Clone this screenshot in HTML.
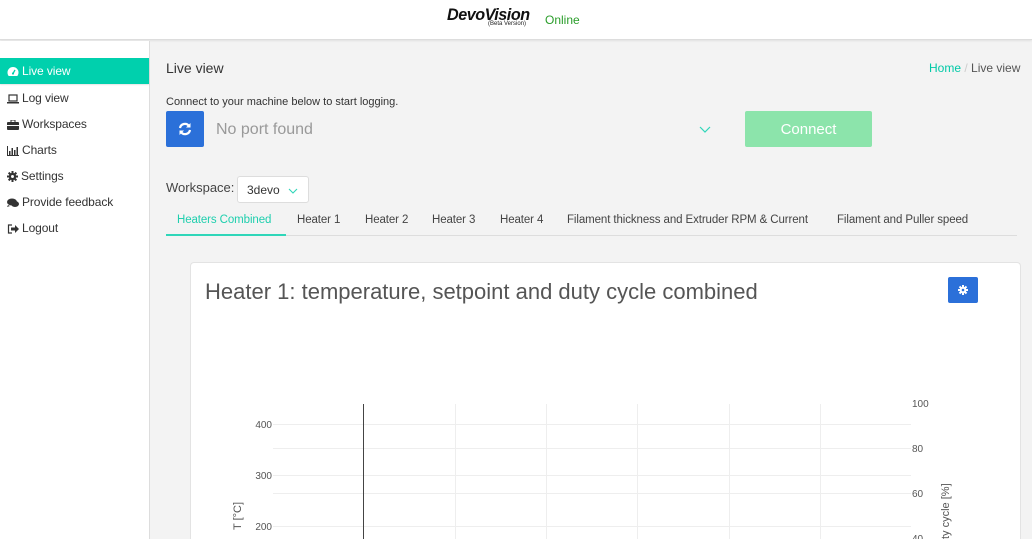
<!DOCTYPE html>
<html><head><meta charset="utf-8"><style>
*{margin:0;padding:0;box-sizing:border-box}
html,body{width:1032px;height:539px;overflow:hidden}
body{background:#f3f3f3;font-family:"Liberation Sans",sans-serif;position:relative;color:#333}
.a{position:absolute;white-space:nowrap}
#hdr{left:0;top:0;width:1032px;height:40px;background:#fff;border-bottom:1px solid #ddd;box-shadow:0 1px 2px rgba(0,0,0,.08)}
#side{left:0;top:41px;width:150px;height:498px;background:#fff;border-right:1px solid #ddd}
.nav{position:absolute;left:0;width:149px;height:26px;font-size:12px;line-height:26px;padding-left:7px;color:#333;letter-spacing:-0.1px}
.nav svg{vertical-align:-2px;margin-right:3px}
.tab{font-size:11.5px;color:#444;top:214px;letter-spacing:-0.1px}
</style></head><body>
<div id="hdr" class="a">
 <div class="a" style="left:447px;top:5px;font-size:17px;font-weight:bold;font-style:italic;color:#111;letter-spacing:-0.5px;transform:scaleX(0.95);transform-origin:left">DevoVision</div>
 <div class="a" style="left:488px;top:21px;font-size:6px;color:#222">(Beta Version)</div>
 <div class="a" style="left:545px;top:13px;font-size:12px;color:#2a9d2a">Online</div>
</div>
<div id="side" class="a">
 <div class="nav" style="top:17px;background:#00d0ad;color:#fff;box-shadow:0 1px 1px rgba(0,0,0,.1)"><svg width="12" height="11" viewBox="0 0 12 11"><path d="M6 1A5.5 5.5 0 0 0 .5 6.5c0 1.3.4 2.5 1.2 3.5h8.6c.8-1 1.2-2.2 1.2-3.5A5.5 5.5 0 0 0 6 1z" fill="#fff"/><path d="M6 7.5L8 4" stroke="#00d0ad" stroke-width="1.3"/><circle cx="6" cy="7.5" r="1.1" fill="#00d0ad"/></svg>Live view</div>
 <div class="nav" style="top:44px"><svg width="12" height="10" viewBox="0 0 12 10"><rect x="2" y="1" width="8" height="6" fill="none" stroke="#333" stroke-width="1.2"/><rect x="0" y="8" width="12" height="1.5" fill="#333"/></svg>Log view</div>
 <div class="nav" style="top:70px"><svg width="12" height="10" viewBox="0 0 12 10"><rect x="0" y="2" width="12" height="8" rx="1" fill="#333"/><rect x="4" y="0" width="4" height="2.5" fill="none" stroke="#333"/><rect x="0" y="5" width="12" height="1" fill="#fff"/></svg>Workspaces</div>
 <div class="nav" style="top:96px"><svg width="12" height="10" viewBox="0 0 12 10"><path d="M.5 0v9.5H12" fill="none" stroke="#333"/><rect x="2" y="5" width="1.5" height="4" fill="#333"/><rect x="4.5" y="2" width="1.5" height="7" fill="#333"/><rect x="7" y="4" width="1.5" height="5" fill="#333"/><rect x="9.5" y="1" width="1.5" height="8" fill="#333"/></svg>Charts</div>
 <div class="nav" style="top:122px"><svg width="11" height="11" viewBox="0 0 12 12"><circle cx="6" cy="6" r="4" fill="#333"/><path d="M6 0v12M0 6h12M1.8 1.8l8.4 8.4M10.2 1.8l-8.4 8.4" stroke="#333" stroke-width="2.2"/><circle cx="6" cy="6" r="1.6" fill="#fff"/></svg>Settings</div>
 <div class="nav" style="top:148px"><svg width="12" height="10" viewBox="0 0 12 10"><ellipse cx="5" cy="4" rx="5" ry="3.5" fill="#333"/><ellipse cx="8" cy="6" rx="4" ry="3" fill="#333"/><path d="M1 7l-1 2 3-1z" fill="#333"/></svg>Provide feedback</div>
 <div class="nav" style="top:174px"><svg width="12" height="10" viewBox="0 0 12 10"><path d="M5 1H1.5v8H5" fill="none" stroke="#333" stroke-width="1.2"/><path d="M4 3.5h4V1l4 4-4 4V6.5H4z" fill="#333"/></svg>Logout</div>
</div>
<div class="a" style="left:166px;top:60px;font-size:14px;color:#333">Live view</div>
<div class="a" style="left:929px;top:61px;font-size:12px;color:#00c9a7">Home <span style="color:#ccc">/</span> <span style="color:#555">Live view</span></div>
<div class="a" style="left:166px;top:96px;font-size:11px;color:#333">Connect to your machine below to start logging.</div>
<div class="a" style="left:166px;top:111px;width:38px;height:36px;background:#2b70d9;border-radius:2px"><svg style="position:absolute;left:12px;top:11px" width="14" height="14" viewBox="0 0 14 14"><path d="M2 6a5 5 0 0 1 9-2" fill="none" stroke="#fff" stroke-width="2.2"/><path d="M12.5 1v4.5H8z" fill="#fff"/><path d="M12 8a5 5 0 0 1-9 2" fill="none" stroke="#fff" stroke-width="2.2"/><path d="M1.5 13V8.5H6z" fill="#fff"/></svg></div>
<div class="a" style="left:216px;top:121px;font-size:16px;color:#999">No port found</div>
<svg class="a" style="left:699px;top:126px" width="12" height="8" viewBox="0 0 12 8"><path d="M1 1l5 5 5-5" fill="none" stroke="#2fd6b9" stroke-width="1.2"/></svg>
<div class="a" style="left:745px;top:111px;width:127px;height:36px;background:#8ce4ab;border-radius:2px;color:#fff;font-size:15px;text-align:center;line-height:38px">Connect</div>
<div class="a" style="left:166px;top:180px;font-size:13px;color:#444">Workspace:</div>
<div class="a" style="left:237px;top:176px;width:72px;height:27px;background:#fff;border:1px solid #ddd;border-radius:3px;font-size:12px;line-height:26px;padding-left:9px;color:#333">3devo<svg style="position:absolute;left:50px;top:11px" width="10" height="6" viewBox="0 0 10 6"><path d="M1 1l4 4 4-4" fill="none" stroke="#2fd6b9" stroke-width="1.1"/></svg></div>
<div class="a" style="left:166px;top:235px;width:851px;height:1px;background:#ddd"></div>
<div class="a" style="left:166px;top:234px;width:120px;height:2px;background:#2fd6b9"></div>
<div class="a tab" style="left:177px;color:#1fcfae">Heaters Combined</div>
<div class="a tab" style="left:297px">Heater 1</div>
<div class="a tab" style="left:365px">Heater 2</div>
<div class="a tab" style="left:432px">Heater 3</div>
<div class="a tab" style="left:500px">Heater 4</div>
<div class="a tab" style="left:567px">Filament thickness and Extruder RPM &amp; Current</div>
<div class="a tab" style="left:837px">Filament and Puller speed</div>
<div class="a" style="left:190px;top:262px;width:831px;height:277px;background:#fff;border:1px solid #e3e3e3;border-bottom:none;border-radius:4px 4px 0 0"></div>
<div class="a" style="left:205px;top:279px;font-size:22px;color:#555;font-weight:300">Heater 1: temperature, setpoint and duty cycle combined</div>
<div class="a" style="left:948px;top:277px;width:30px;height:26px;background:#2b70d9;border-radius:2px"><svg style="position:absolute;left:9px;top:7px" width="12" height="12" viewBox="0 0 12 12"><path d="M6 1v10M1 6h10M2.5 2.5l7 7M9.5 2.5l-7 7" stroke="#fff" stroke-width="2"/><circle cx="6" cy="6" r="3.3" fill="#fff"/><circle cx="6" cy="6" r="1.3" fill="#2b70d9"/></svg></div>
<svg class="a" style="left:0;top:0" width="1032" height="539">
 <g stroke="#eee" stroke-width="1">
  <line x1="273" y1="424.5" x2="911" y2="424.5"/><line x1="273" y1="448.5" x2="911" y2="448.5"/>
  <line x1="273" y1="475.5" x2="911" y2="475.5"/><line x1="273" y1="493.5" x2="911" y2="493.5"/>
  <line x1="273" y1="526.5" x2="911" y2="526.5"/>
  <line x1="455.5" y1="404" x2="455.5" y2="539"/><line x1="546.5" y1="404" x2="546.5" y2="539"/>
  <line x1="637.5" y1="404" x2="637.5" y2="539"/><line x1="729.5" y1="404" x2="729.5" y2="539"/>
  <line x1="820.5" y1="404" x2="820.5" y2="539"/>
 </g>
 <line x1="363.5" y1="404" x2="363.5" y2="539" stroke="#444"/>
 <g font-family="Liberation Sans" font-size="10" fill="#555">
  <text x="272" y="428" text-anchor="end">400</text><text x="272" y="479" text-anchor="end">300</text><text x="272" y="530" text-anchor="end">200</text>
  <text x="912" y="407">100</text><text x="912" y="452">80</text><text x="912" y="497">60</text><text x="912" y="542">40</text>
  <text transform="translate(241,530) rotate(-90)" font-size="11">T [°C]</text>
  <text transform="translate(949,539) rotate(-90)" font-size="11">ty cycle [%]</text>
 </g>
</svg>
</body></html>
